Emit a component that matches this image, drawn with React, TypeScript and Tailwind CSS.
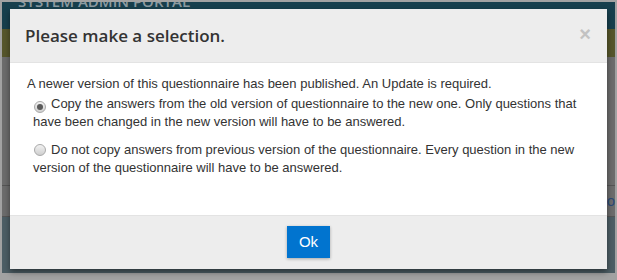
import React from 'react';

type Choice = {
  id: string;
  label: string;
  checked: boolean;
};

const choices: Choice[] = [
  {
    id: 'copy',
    label:
      'Copy the answers from the old version of questionnaire to the new one. Only questions that have been changed in the new version will have to be answered.',
    checked: true,
  },
  {
    id: 'fresh',
    label:
      'Do not copy answers from previous version of the questionnaire. Every question in the new version of the questionnaire will have to be answered.',
    checked: false,
  },
];

function RadioDot({ checked }: { checked: boolean }) {
  return (
    <span className="relative top-[1px] ml-[1px] mr-[5px] inline-flex h-[12px] w-[12px] items-center justify-center rounded-full border border-[#a9a9a9] bg-gradient-to-b from-[#f2f2f2] to-[#cfcfcf] align-[-1px]">
      {checked && <span className="h-[6px] w-[6px] rounded-full bg-[#5a5a5a]" />}
    </span>
  );
}

export default function App() {
  return (
    <div className="relative h-[280px] w-[617px] overflow-hidden bg-[#a2a2a2] px-[2px] pt-[2px] font-['Liberation_Sans',Arial,sans-serif]">
      {/* page behind the overlay */}
      <div className="flex h-[271px] flex-col">
        <div className="h-[27px] shrink-0 overflow-hidden bg-[#173f4d] pl-[16px]">
          <div className="-mt-[11px] font-['Open_Sans',sans-serif] text-[15px] leading-[20px] font-semibold text-[#8c9ba1]">
            SYSTEM ADMIN PORTAL
          </div>
        </div>
        <div className="h-[28px] shrink-0 bg-[#56562b]" />
        <div className="h-[129px] shrink-0 border-b border-[#555] bg-[#6c6c6c]" />
        <div className="flex h-[31px] shrink-0 items-center justify-end border-b border-[#555] bg-[#6c6c6c] text-[15px] text-[#2a4a78]">
          tio
        </div>
        <div className="flex-1 bg-[#4d5e65]" />
      </div>

      {/* modal */}
      <div className="absolute left-[10px] top-[9px] flex h-[260px] w-[597px] flex-col bg-white shadow-[0_3px_6px_rgba(0,0,0,0.45)]">
        <div className="flex h-[54px] shrink-0 items-center justify-between border-b border-[#e3e3e3] bg-[#ededed] pl-[15px] pr-[16px]">
          <h4 className="font-['Open_Sans',sans-serif] text-[17px] font-semibold text-[#333]">
            Please make a selection.
          </h4>
          <span className="-mt-[4px] text-[20px] font-bold leading-none text-[#c2c2c2]">×</span>
        </div>

        <div className="flex-1 pl-[17px] pr-[15px] pt-[11px] text-[13px] text-[#333]">
          <p className="leading-[20px]">
            A newer version of this questionnaire has been published. An Update is required.
          </p>
          <div className="flex flex-col gap-[10px] pl-[6px] pt-[1px]">
            {choices.map((choice) => (
              <label key={choice.id} className="block leading-[18px]">
                <RadioDot checked={choice.checked} />
                {choice.label}
              </label>
            ))}
          </div>
        </div>

        <div className="flex h-[54px] shrink-0 justify-center border-t border-[#e3e3e3] bg-[#ededed] pt-[10px]">
          <button
            type="button"
            className="h-[32px] w-[43px] bg-[#0174cf] text-[15px] text-white shadow-[0_1px_3px_rgba(0,0,0,0.3)]"
          >
            Ok
          </button>
        </div>
      </div>
    </div>
  );
}
